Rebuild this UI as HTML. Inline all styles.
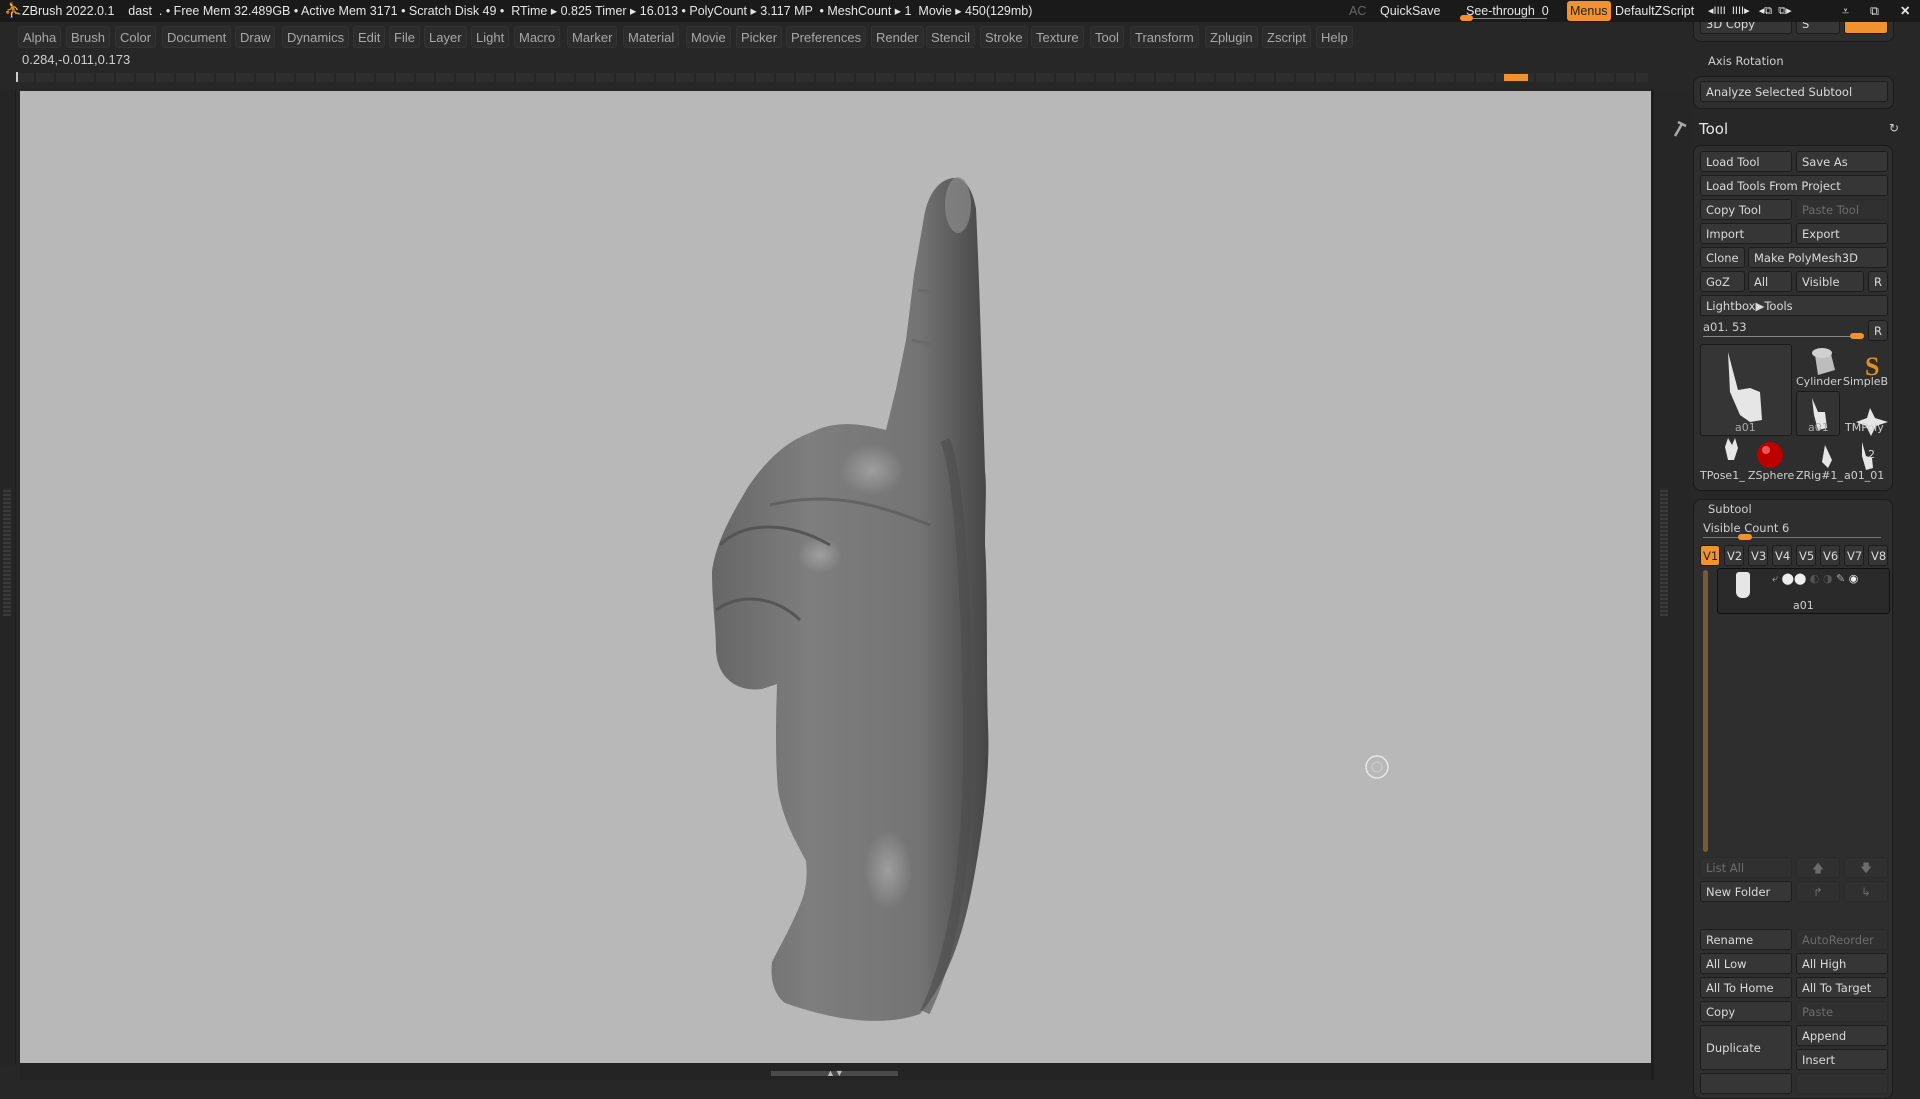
<!DOCTYPE html>
<html><head><meta charset="utf-8"><style>
*{margin:0;padding:0;box-sizing:border-box}
body{width:1920px;height:1080px;background:#272727;overflow:hidden;position:relative;font-family:"Liberation Sans Narrow","Liberation Sans",sans-serif;color:#d8d8d8}
.a{position:absolute;white-space:nowrap}
#top{left:0;top:0;width:1920px;height:22px;background:#1a1a1a;font-size:12.5px;line-height:22px;color:#e6e6e6;z-index:10}
.m{position:absolute;top:26px;height:22px;line-height:22px;font-size:13px;color:#a8a8a8;background:#2c2c2c;border:1px solid #333;border-radius:3px;padding:0 4px}
#vp{left:20px;top:91px;width:1631px;height:972px;background:#b8b8b8}
.b{position:absolute;height:21px;line-height:20px;background:#363636;border:1px solid #1c1c1c;border-radius:3px;padding-left:5px;font-family:"DejaVu Sans",sans-serif;font-size:11.5px;color:#dadada;white-space:nowrap;overflow:hidden}
.d{color:#6c6c6c;background:#303030;border-color:#2a2a2a}
.box{position:absolute;border:1px solid #1a1a1a;border-radius:8px;background:#2e2e2e}
.lbl{position:absolute;font-family:"DejaVu Sans",sans-serif;font-size:11px;color:#cfcfcf;white-space:nowrap}
</style></head><body>
<div class="a" id="top">
 <span class="a" style="left:4px;top:0;font-size:15px">⛹</span>
 <span class="a" style="left:22px">ZBrush 2022.0.1 &nbsp;&nbsp; dast &nbsp;. • Free Mem 32.489GB • Active Mem 3171 • Scratch Disk 49 • &nbsp;RTime ▸ 0.825 Timer ▸ 16.013 • PolyCount ▸ 3.117 MP &nbsp;• MeshCount ▸ 1 &nbsp;Movie ▸ 450(129mb)</span>
 <span class="a" style="left:1349px;color:#666">AC</span>
 <span class="a" style="left:1380px">QuickSave</span>
 <span class="a" style="left:1466px">See-through &nbsp;0</span>
 <div class="a" style="left:1462px;top:18px;width:85px;height:1px;background:#888"></div>
 <div class="a" style="left:1460px;top:15px;width:13px;height:6px;background:#f0922e;border-radius:3px"></div>
 <span class="a" style="left:1567px;top:1px;height:20px;line-height:20px;padding:0 3px;background:#f0922e;border-radius:3px;color:#222">Menus</span>
 <span class="a" style="left:1615px">DefaultZScript</span>
 <span class="a" style="left:1708px;font-size:11px">◂IIII &nbsp;IIII▸ &nbsp;&nbsp;◂⧉ &nbsp;⧉▸</span>
 <span class="a" style="left:1842px">⩡</span><span class="a" style="left:1870px">⧉</span><span class="a" style="left:1900px;font-weight:bold">✕</span>
</div>
<div class="m" style="left:18px">Alpha</div><div class="m" style="left:66px">Brush</div><div class="m" style="left:115px">Color</div><div class="m" style="left:162px">Document</div><div class="m" style="left:235px">Draw</div><div class="m" style="left:282px">Dynamics</div><div class="m" style="left:353px">Edit</div><div class="m" style="left:389px">File</div><div class="m" style="left:424px">Layer</div><div class="m" style="left:471px">Light</div><div class="m" style="left:514px">Macro</div><div class="m" style="left:567px">Marker</div><div class="m" style="left:623px">Material</div><div class="m" style="left:686px">Movie</div><div class="m" style="left:736px">Picker</div><div class="m" style="left:786px">Preferences</div><div class="m" style="left:871px">Render</div><div class="m" style="left:926px">Stencil</div><div class="m" style="left:980px">Stroke</div><div class="m" style="left:1031px">Texture</div><div class="m" style="left:1090px">Tool</div><div class="m" style="left:1130px">Transform</div><div class="m" style="left:1205px">Zplugin</div><div class="m" style="left:1262px">Zscript</div><div class="m" style="left:1316px">Help</div>
<div class="a" style="left:22px;top:52px;font-size:13px;color:#cfcfcf">0.284,-0.011,0.173</div>
<div class="a" style="left:16px;top:73px;width:1632px;height:9px;background:repeating-linear-gradient(90deg,#2e2e2e 0 18px,#262626 18px 20px)"></div>
<div class="a" style="left:16px;top:72px;width:2px;height:10px;background:#ccc"></div>
<div class="a" style="left:1504px;top:74px;width:24px;height:7px;background:#f0922e"></div>
<div class="a" style="left:0;top:90px;width:16px;height:975px;background:#252525;border-right:1px solid #1f1f1f"></div>
<div class="a" style="left:3px;top:488px;width:8px;height:128px;background:repeating-linear-gradient(0deg,#3a3a3a 0 2px,#2a2a2a 2px 4px)"></div>
<div class="a" style="left:1651px;top:90px;width:40px;height:990px;background:#262626;border-left:3px solid #1e1e1e"></div>
<div class="a" style="left:1660px;top:488px;width:8px;height:128px;background:repeating-linear-gradient(0deg,#3a3a3a 0 2px,#2a2a2a 2px 4px)"></div>
<div class="a" id="vp">
<svg width="1631" height="972" viewBox="20 91 1631 972" style="position:absolute;left:0;top:0">
<defs>
<linearGradient id="g" x1="0" x2="1" y1="0" y2="0"><stop offset="0" stop-color="#666"/><stop offset=".35" stop-color="#7e7e7e"/><stop offset=".75" stop-color="#747474"/><stop offset="1" stop-color="#454545"/></linearGradient>
<radialGradient id="h" cx=".5" cy=".5" r=".5"><stop offset="0" stop-color="#a8a8a8" stop-opacity=".8"/><stop offset="1" stop-color="#a8a8a8" stop-opacity="0"/></radialGradient>
</defs>
<path fill="url(#g)" d="M955,178 C940,178 928,193 924,217 L914,275 L906,340 L896,389 L886,430 C865,425 838,419 812,432 C790,440 770,455 748,487 C730,517 715,545 712,572 C712,602 716,626 716,651 C718,681 740,692 762,689 L777,684 C776,717 775,757 778,790 C784,823 795,839 806,861 C808,880 805,893 800,905 C790,929 780,946 772,962 C770,982 775,995 785,1003 C830,1019 880,1028 920,1014 C950,978 965,929 975,872 C985,815 990,766 988,725 C986,667 988,586 985,545 C985,512 987,487 985,471 L982,373 C980,307 978,250 976,209 C973,190 965,178 955,178 Z"/>
<path d="M945,440 C958,470 966,580 968,720 C970,850 955,950 925,1012" stroke="#4c4c4c" stroke-width="10" fill="none" opacity=".6"/>
<ellipse cx="888" cy="870" rx="24" ry="40" fill="url(#h)"/>
<ellipse cx="872" cy="470" rx="32" ry="26" fill="url(#h)"/>
<ellipse cx="820" cy="555" rx="22" ry="18" fill="url(#h)"/>
<ellipse cx="958" cy="205" rx="13" ry="28" fill="#8c8c8c" opacity=".7"/>
<path d="M720,545 C745,520 790,522 830,545" stroke="#555" stroke-width="3" fill="none"/>
<path d="M716,610 C745,590 780,600 800,620" stroke="#555" stroke-width="3" fill="none"/>
<path d="M770,505 C830,490 880,505 930,525" stroke="#5a5a5a" stroke-width="3" fill="none" opacity=".7"/>
<path d="M918,290 L935,292 M912,340 L935,345" stroke="#6a6a6a" stroke-width="3"/>
<circle cx="1377" cy="767" r="11" fill="none" stroke="#e8e8e8" stroke-width="1.5"/>
<circle cx="1377" cy="767" r="5" fill="none" stroke="#cfcfcf" stroke-width="1"/>
</svg>
</div>
<div class="a" style="left:20px;top:1063px;width:1631px;height:17px;background:#242424"></div>
<div class="a" style="left:771px;top:1071px;width:127px;height:5px;background:#4a4a4a"></div>
<div class="a" style="left:826px;top:1068px;color:#bbb;font-size:9px">▲▼</div>

<div class="box" style="left:1693px;top:2px;width:201px;height:40px"></div>
<div class="b" style="left:1700px;top:13px;width:92px">3D Copy</div>
<div class="b" style="left:1796px;top:13px;width:44px">S</div>
<div class="b" style="left:1844px;top:13px;width:44px;background:#f0922e"></div>
<div class="lbl" style="left:1708px;top:54px;font-size:11.5px">Axis Rotation</div>
<div class="box" style="left:1693px;top:76px;width:201px;height:33px"></div>
<div class="b" style="left:1700px;top:81px;width:188px">Analyze Selected Subtool</div>
<svg class="a" style="left:1672px;top:118px" width="18" height="20"><path d="M3,18 L10,6 M6,4 L14,8" stroke="#aaa" stroke-width="2.5" fill="none"/></svg>
<div class="lbl" style="left:1699px;top:120px;font-size:15px;color:#e6e6e6">Tool</div>
<div class="lbl" style="left:1889px;top:121px;font-size:12px">↻</div>
<div class="box" style="left:1693px;top:145px;width:200px;height:346px"></div>
<div class="b" style="left:1700px;top:151px;width:92px">Load Tool</div><div class="b" style="left:1796px;top:151px;width:92px">Save As</div>
<div class="b" style="left:1700px;top:175px;width:188px">Load Tools From Project</div>
<div class="b" style="left:1700px;top:199px;width:92px">Copy Tool</div><div class="b d" style="left:1796px;top:199px;width:92px">Paste Tool</div>
<div class="b" style="left:1700px;top:223px;width:92px">Import</div><div class="b" style="left:1796px;top:223px;width:92px">Export</div>
<div class="b" style="left:1700px;top:247px;width:45px">Clone</div><div class="b" style="left:1748px;top:247px;width:140px">Make PolyMesh3D</div>
<div class="b" style="left:1700px;top:271px;width:45px">GoZ</div><div class="b" style="left:1748px;top:271px;width:44px">All</div><div class="b" style="left:1796px;top:271px;width:68px">Visible</div><div class="b" style="left:1868px;top:271px;width:20px">R</div>
<div class="b" style="left:1700px;top:295px;width:188px">Lightbox▶Tools</div>
<div class="lbl" style="left:1703px;top:320px;font-size:11.5px">a01. 53</div>
<div class="b" style="left:1868px;top:320px;width:20px">R</div>
<div class="a" style="left:1703px;top:336px;width:160px;height:1px;background:#888"></div>
<div class="a" style="left:1850px;top:333px;width:14px;height:6px;background:#f0922e;border-radius:3px"></div>
<div class="a" style="left:1700px;top:344px;width:92px;height:92px;background:#353535;border:1px solid #1a1a1a;border-radius:3px"></div>
<div class="a" style="left:1796px;top:391px;width:44px;height:45px;background:#333;border:1px solid #1a1a1a;border-radius:3px"></div>
<svg class="a" style="left:1690px;top:330px" width="210" height="160">
<g fill="#e6e6e6">
<path d="M38,22 L48,60 L60,58 L70,62 L72,90 L60,92 L50,85 L40,62 Z"/>
<path d="M122,68 L128,82 L135,82 L137,98 L128,100 L124,85 Z"/>
<path d="M35,117 L38,108 L42,115 L45,108 L48,118 L44,130 L38,130 Z"/>
<path d="M135,115 L132,132 L138,138 L142,130 Z"/>
<path d="M172,112 L176,126 L182,128 L183,138 L176,140 L172,126 Z"/>
<path d="M180,78 L185,88 L198,92 L186,96 L181,106 L176,96 L166,92 L177,88 Z"/>
</g>
<path d="M125,25 L140,20 L145,40 L128,45 Z" fill="#bdbdbd"/>
<ellipse cx="132" cy="23" rx="10" ry="5" fill="#d0d0d0"/>
<text x="175" y="45" font-size="26" font-weight="bold" fill="#e09020" font-family="Liberation Serif">S</text>
<circle cx="80" cy="125" r="13" fill="#b00"/>
<circle cx="76" cy="120" r="4" fill="#e55"/>
<text x="178" y="128" font-size="11" fill="#ddd" font-family="DejaVu Sans">2</text>
</svg>
<div class="lbl" style="left:1735px;top:421px;color:#aaa">a01</div>
<div class="lbl" style="left:1796px;top:375px">Cylinder</div><div class="lbl" style="left:1843px;top:375px">SimpleB</div>
<div class="lbl" style="left:1808px;top:421px;color:#aaa">a01</div><div class="lbl" style="left:1845px;top:421px">TMPoly</div>
<div class="lbl" style="left:1700px;top:469px">TPose1_</div><div class="lbl" style="left:1748px;top:469px">ZSphere</div><div class="lbl" style="left:1796px;top:469px">ZRig#1_</div><div class="lbl" style="left:1844px;top:469px">a01_01</div>

<div class="box" style="left:1693px;top:499px;width:200px;height:600px"></div>
<div class="lbl" style="left:1708px;top:502px;font-size:11.5px">Subtool</div>
<div class="lbl" style="left:1703px;top:521px;font-size:11.5px">Visible Count 6</div>
<div class="a" style="left:1703px;top:537px;width:178px;height:1px;background:#777"></div>
<div class="a" style="left:1738px;top:534px;width:14px;height:6px;background:#f0922e;border-radius:3px"></div>
<div class="b" style="left:1700px;top:545px;width:20px;background:#f0922e;color:#222;padding-left:2px">V1</div>
<div class="b" style="left:1724px;top:545px;width:20px;padding-left:2px">V2</div><div class="b" style="left:1748px;top:545px;width:20px;padding-left:2px">V3</div><div class="b" style="left:1772px;top:545px;width:20px;padding-left:2px">V4</div><div class="b" style="left:1796px;top:545px;width:20px;padding-left:2px">V5</div><div class="b" style="left:1820px;top:545px;width:20px;padding-left:2px">V6</div><div class="b" style="left:1844px;top:545px;width:20px;padding-left:2px">V7</div><div class="b" style="left:1868px;top:545px;width:20px;padding-left:2px">V8</div>
<div class="a" style="left:1703px;top:570px;width:5px;height:282px;background:#7a5a33;border-radius:3px"></div>
<div class="a" style="left:1717px;top:568px;width:173px;height:46px;background:#2a2a2a;border:1px solid #111;border-radius:3px"></div>
<div class="a" style="left:1736px;top:572px;width:14px;height:26px;background:#e6e6e6;border-radius:3px 3px 6px 6px"></div>
<div class="lbl" style="left:1772px;top:572px;font-size:11px;color:#aaa">⤶ <span style="color:#eee">⬤⬤</span> <span style="color:#555">◐ ◑</span> ✎ <span style="color:#eee">◉</span></div>
<div class="lbl" style="left:1793px;top:599px">a01</div>
<div class="b d" style="left:1700px;top:857px;width:92px">List All</div><div class="b d" style="left:1796px;top:857px;width:44px;text-align:center;padding:0">🡅</div><div class="b d" style="left:1844px;top:857px;width:44px;text-align:center;padding:0">🡇</div>
<div class="b" style="left:1700px;top:881px;width:92px">New Folder</div><div class="b d" style="left:1796px;top:881px;width:44px;text-align:center;padding:0">↱</div><div class="b d" style="left:1844px;top:881px;width:44px;text-align:center;padding:0">↳</div>
<div class="b" style="left:1700px;top:929px;width:92px">Rename</div><div class="b d" style="left:1796px;top:929px;width:92px">AutoReorder</div>
<div class="b" style="left:1700px;top:953px;width:92px">All Low</div><div class="b" style="left:1796px;top:953px;width:92px">All High</div>
<div class="b" style="left:1700px;top:977px;width:92px">All To Home</div><div class="b" style="left:1796px;top:977px;width:92px">All To Target</div>
<div class="b" style="left:1700px;top:1001px;width:92px">Copy</div><div class="b d" style="left:1796px;top:1001px;width:92px">Paste</div>
<div class="b" style="left:1700px;top:1025px;width:92px;height:45px;line-height:44px">Duplicate</div><div class="b" style="left:1796px;top:1025px;width:92px">Append</div><div class="b" style="left:1796px;top:1049px;width:92px">Insert</div>
<div class="b" style="left:1700px;top:1073px;width:92px"></div><div class="b d" style="left:1796px;top:1073px;width:92px"></div>
</body></html>
